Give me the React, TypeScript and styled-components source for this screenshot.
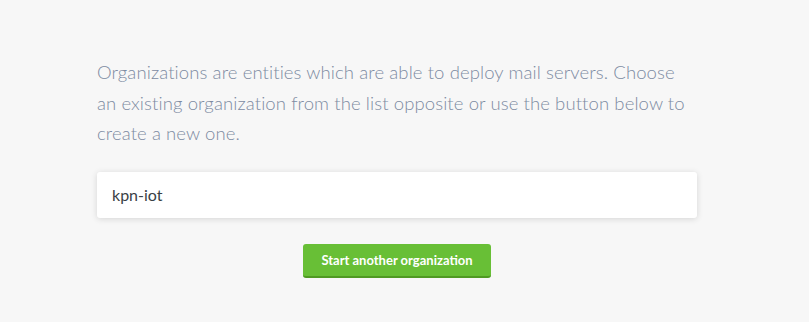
import styled, { createGlobalStyle } from "styled-components";

const GlobalStyle = createGlobalStyle`
  html, body {
    margin: 0;
    padding: 0;
    background: #f7f7f7;
  }
  body {
    font-family: Lato, "Open Sans", sans-serif;
  }
`;

const Page = styled.div`
  width: 809px;
  height: 322px;
  padding: 57px 0 0 97px;
  box-sizing: border-box;
`;

const Column = styled.div`
  width: 600px;
  display: flex;
  flex-direction: column;
  align-items: center;
`;

const Intro = styled.p`
  margin: 0 0 23px 0;
  font-size: 18.5px;
  line-height: 30.5px;
  font-weight: 300;
  color: #7d8ba2;
  letter-spacing: 0.1px;
  white-space: nowrap;
  align-self: flex-start;
`;

const OrgCard = styled.div`
  width: 100%;
  height: 46px;
  box-sizing: border-box;
  background: #fff;
  border-radius: 3px;
  box-shadow: 0 1px 6px rgba(0, 0, 0, 0.14);
  display: flex;
  align-items: center;
  padding: 0 15px;
  font-size: 16px;
  color: #3a3f45;
  cursor: pointer;
`;

const StartButton = styled.button`
  margin-top: 26px;
  height: 34px;
  padding: 0 18px;
  border: none;
  border-bottom: 2px solid #4f9a22;
  border-radius: 3px;
  background: #68bf36;
  color: #fff;
  font-family: Lato, "Open Sans", sans-serif;
  font-size: 13px;
  font-weight: 700;
  cursor: pointer;
`;

export default function App() {
  return (
    <>
      <GlobalStyle />
      <Page>
        <Column>
          <Intro>
            Organizations are entities which are able to deploy mail servers. Choose
            <br />
            an existing organization from the list opposite or use the button below to
            <br />
            create a new one.
          </Intro>
          <OrgCard>kpn-iot</OrgCard>
          <StartButton>Start another organization</StartButton>
        </Column>
      </Page>
    </>
  );
}
